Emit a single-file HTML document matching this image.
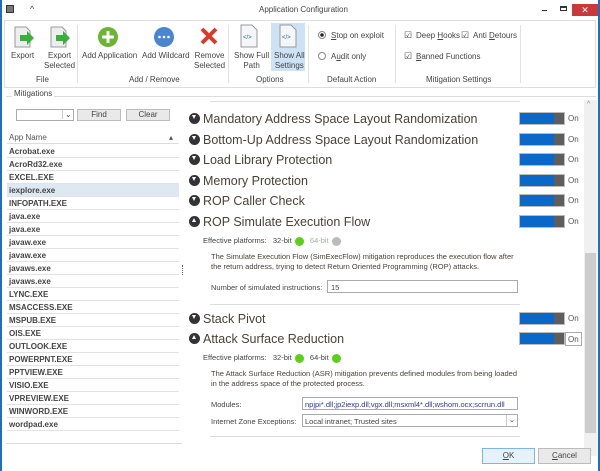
<!DOCTYPE html><html><head><style>
*{margin:0;padding:0;box-sizing:border-box}
body{width:600px;height:471px;overflow:hidden;background:#fff;font-family:"Liberation Sans",sans-serif;color:#333;position:relative;font-size:8px}
.a{position:absolute;white-space:nowrap}
.t{font-size:8px;color:#444}
.h{font-size:12.5px;color:#4a4236}
.ico{width:11px;height:11px;border-radius:50%;background:#333;display:inline-block;position:absolute;left:189px}
.ico:after{content:"";position:absolute;left:3px;top:2px;border:2.5px solid transparent;border-top:4px solid #fff;}
.up:after{top:0;border-top:2.5px solid transparent;border-bottom:4px solid #fff}
.tg{position:absolute;left:519px;width:46px;height:13px;border:1px solid #bbb;background:#0a68c8}
.tg:after{content:"";position:absolute;right:0;top:0;width:10px;height:11px;background:#5e5e5e}
.on{position:absolute;left:568px;font-size:8px;color:#555}
.row{position:absolute;left:7px;width:172px;height:13px;border-bottom:1px solid #e2e2e2;font-weight:bold;font-size:8px;color:#444;padding:2px 0 0 2px;font-family:"Liberation Sans",sans-serif}
.btn{position:absolute;border:1px solid #bbb;background:#e9e9e9;text-align:center;font-size:8px;color:#444}
.sep{position:absolute;height:1px;background:#ddd}
.dot{display:inline-block;width:9px;height:9px;border-radius:50%;background:#5ccf1a;vertical-align:middle;margin-left:3px}
</style></head><body>
<div class="a" style="left:0;top:0;width:2px;height:471px;background:#1e6fbf"></div>
<div class="a" style="left:598px;top:0;width:2px;height:471px;background:#1e6fbf"></div>
<!-- title -->
<div class="a" style="left:6px;top:5px;width:8px;height:8px;border:1px solid #333;background:#777"></div>
<div class="a t" style="left:30px;top:4px;font-size:9px">^</div>
<div class="a t" style="left:259px;top:5px;font-size:8px">Application Configuration</div>
<div class="a" style="left:542px;top:10px;width:5px;height:1px;background:#333"></div>
<div class="a" style="left:560px;top:6px;width:7px;height:5px;border:1px solid #333;border-top-width:2px"></div>
<div class="a" style="left:572px;top:4px;width:26px;height:12px;background:#c9383a;color:#fff;text-align:center;font-size:9px;line-height:12px">✕</div>
<!-- ribbon -->
<div class="a" style="left:4px;top:20px;width:592px;height:68px;border:1px solid #ddd;background:#fff"></div>
<div class="a" style="left:271px;top:23px;width:34px;height:48px;background:#cde2f5"></div>
<svg class="a" style="left:12px;top:25px" width="24" height="24"><path d="M3 2h11l4 4v16H3z" fill="#eee" stroke="#999"/><path d="M8 10h7v-4l7 7-7 7v-4H8z" fill="#3cae3c"/></svg>
<svg class="a" style="left:48px;top:25px" width="24" height="24"><path d="M3 2h11l4 4v16H3z" fill="#eee" stroke="#999"/><path d="M8 10h7v-4l7 7-7 7v-4H8z" fill="#3cae3c"/></svg>
<svg class="a" style="left:97px;top:26px" width="22" height="22"><circle cx="11" cy="11" r="10" fill="#6ab531"/><path d="M11 5v12M5 11h12" stroke="#fff" stroke-width="3"/></svg>
<svg class="a" style="left:153px;top:26px" width="22" height="22"><circle cx="11" cy="11" r="10" fill="#4a86d0"/><circle cx="6.5" cy="11" r="1.3" fill="#fff"/><circle cx="11" cy="11" r="1.3" fill="#fff"/><circle cx="15.5" cy="11" r="1.3" fill="#fff"/></svg>
<svg class="a" style="left:199px;top:26px" width="20" height="20"><path d="M3 3l14 14M17 3L3 17" stroke="#d83a2e" stroke-width="4"/></svg>
<svg class="a" style="left:239px;top:24px" width="20" height="24"><path d="M2 1h11l5 5v17H2z" fill="#f4f6f8" stroke="#999"/><text x="4" y="15" font-size="6" fill="#2b5c9e" font-family="Liberation Sans">&lt;/&gt;</text></svg>
<svg class="a" style="left:278px;top:24px" width="20" height="24"><path d="M2 1h11l5 5v17H2z" fill="#f4f6f8" stroke="#999"/><text x="4" y="15" font-size="6" fill="#2b5c9e" font-family="Liberation Sans">&lt;/&gt;</text></svg>
<div class="a t" style="left:11px;top:51px">Export</div>
<div class="a t" style="left:44px;top:51px;text-align:center;line-height:10px">Export<br>Selected</div>
<div class="a t" style="left:82px;top:51px">Add Application</div>
<div class="a t" style="left:142px;top:51px">Add Wildcard</div>
<div class="a t" style="left:194px;top:51px;text-align:center;line-height:10px">Remove<br>Selected</div>
<div class="a t" style="left:234px;top:51px;text-align:center;line-height:10px">Show Full<br>Path</div>
<div class="a t" style="left:274px;top:51px;text-align:center;line-height:10px">Show All<br>Settings</div>
<div class="a t" style="left:36px;top:75px">File</div>
<div class="a t" style="left:129px;top:75px">Add / Remove</div>
<div class="a t" style="left:256px;top:75px">Options</div>
<div class="a t" style="left:327px;top:75px">Default Action</div>
<div class="a t" style="left:426px;top:75px">Mitigation Settings</div>
<div class="a" style="left:77px;top:25px;width:1px;height:58px;background:#e2e2e2"></div>
<div class="a" style="left:228px;top:25px;width:1px;height:58px;background:#e2e2e2"></div>
<div class="a" style="left:308px;top:25px;width:1px;height:58px;background:#e2e2e2"></div>
<div class="a" style="left:395px;top:25px;width:1px;height:58px;background:#e2e2e2"></div>
<div class="a" style="left:520px;top:25px;width:1px;height:58px;background:#e2e2e2"></div>
<div class="a" style="left:318px;top:31px;width:8px;height:8px;border:1px solid #888;border-radius:50%;background:radial-gradient(#222 40%,#fff 45%)"></div>
<div class="a t" style="left:331px;top:31px"><u>S</u>top on exploit</div>
<div class="a" style="left:318px;top:52px;width:8px;height:8px;border:1px solid #888;border-radius:50%"></div>
<div class="a t" style="left:331px;top:52px">A<u>u</u>dit only</div>
<div class="a t" style="left:404px;top:30px;font-size:9px">☑</div><div class="a t" style="left:416px;top:31px">Deep <u>H</u>ooks</div>
<div class="a t" style="left:461px;top:30px;font-size:9px">☑</div><div class="a t" style="left:473px;top:31px">Anti <u>D</u>etours</div>
<div class="a t" style="left:404px;top:51px;font-size:9px">☑</div><div class="a t" style="left:416px;top:52px"><u>B</u>anned Functions</div>
<!-- mitigations group -->
<div class="a" style="left:6px;top:96px;width:590px;height:1px;background:#ddd"></div>
<div class="a t" style="left:12px;top:89px;background:#fff;padding:0 2px">Mitigations</div>
<div class="a" style="left:16px;top:109px;width:58px;height:12px;border:1px solid #aaa"></div>
<div class="a t" style="left:62px;top:110px;border-left:1px solid #ccc;padding-left:2px">⌄</div>
<div class="btn" style="left:77px;top:109px;width:44px;height:12px;line-height:10px">Find</div>
<div class="btn" style="left:126px;top:109px;width:44px;height:12px;line-height:10px">Clear</div>
<div class="row" style="top:131px;font-weight:normal;color:#555;border-bottom:1px solid #ddd">App Name<span style="position:absolute;right:6px">▴</span></div>
<div class="row" style="top:145px">Acrobat.exe</div>
<div class="row" style="top:158px">AcroRd32.exe</div>
<div class="row" style="top:171px">EXCEL.EXE</div>
<div class="row" style="top:184px;background:#dde8f3">iexplore.exe</div>
<div class="row" style="top:197px">INFOPATH.EXE</div>
<div class="row" style="top:210px">java.exe</div>
<div class="row" style="top:223px">java.exe</div>
<div class="row" style="top:236px">javaw.exe</div>
<div class="row" style="top:249px">javaw.exe</div>
<div class="row" style="top:262px">javaws.exe</div>
<div class="row" style="top:275px">javaws.exe</div>
<div class="row" style="top:288px">LYNC.EXE</div>
<div class="row" style="top:301px">MSACCESS.EXE</div>
<div class="row" style="top:314px">MSPUB.EXE</div>
<div class="row" style="top:327px">OIS.EXE</div>
<div class="row" style="top:340px">OUTLOOK.EXE</div>
<div class="row" style="top:353px">POWERPNT.EXE</div>
<div class="row" style="top:366px">PPTVIEW.EXE</div>
<div class="row" style="top:379px">VISIO.EXE</div>
<div class="row" style="top:392px">VPREVIEW.EXE</div>
<div class="row" style="top:405px">WINWORD.EXE</div>
<div class="row" style="top:418px">wordpad.exe</div>
<div class="a" style="left:6px;top:443px;width:176px;height:1px;background:#ddd"></div>
<div class="a" style="left:182px;top:265px;width:1px;height:10px;border-left:1px dotted #666"></div>
<!-- right -->
<div class="sep" style="left:210px;top:101px;width:310px"></div>
<div class="a" style="left:584px;top:100px;width:13px;height:356px;background:#f0f0f0"></div>
<div class="a" style="left:585px;top:253px;width:11px;height:180px;background:#cdcdcd"></div>
<div class="a" style="left:587px;top:101px;font-size:7px;color:#888">^</div>
<div class="a" style="left:587px;top:446px;font-size:7px;color:#888">⌄</div>
<div class="ico" style="top:113px"></div><div class="a h" style="left:203px;top:112px">Mandatory Address Space Layout Randomization</div><div class="tg" style="top:112px"></div><div class="on" style="top:114px">On</div>
<div class="ico" style="top:134px"></div><div class="a h" style="left:203px;top:133px">Bottom-Up Address Space Layout Randomization</div><div class="tg" style="top:133px"></div><div class="on" style="top:135px">On</div>
<div class="ico" style="top:154px"></div><div class="a h" style="left:203px;top:153px">Load Library Protection</div><div class="tg" style="top:153px"></div><div class="on" style="top:155px">On</div>
<div class="ico" style="top:175px"></div><div class="a h" style="left:203px;top:174px">Memory Protection</div><div class="tg" style="top:174px"></div><div class="on" style="top:176px">On</div>
<div class="ico" style="top:195px"></div><div class="a h" style="left:203px;top:194px">ROP Caller Check</div><div class="tg" style="top:194px"></div><div class="on" style="top:196px">On</div>
<div class="ico up" style="top:216px"></div><div class="a h" style="left:203px;top:215px">ROP Simulate Execution Flow</div><div class="tg" style="top:215px"></div><div class="on" style="top:217px">On</div>
<div class="a t" style="left:203px;top:236px;font-size:7.5px">Effective platforms: &nbsp; 32-bit<span class="dot"></span> &nbsp; <span style="color:#aaa">64-bit</span><span class="dot" style="background:#bbb"></span></div>
<div class="a" style="left:211px;top:252px;font-size:7.5px;color:#4a4236;line-height:10px">The Simulate Execution Flow (SimExecFlow) mitigation reproduces the execution flow after<br>the return address, trying to detect Return Oriented Programming (ROP) attacks.</div>
<div class="a t" style="left:211px;top:283px;font-size:7.5px">Number of simulated instructions:</div>
<div class="a t" style="left:327px;top:280px;width:191px;height:13px;border:1px solid #aaa;padding:2px 3px;font-size:7.5px">15</div>
<div class="sep" style="left:210px;top:304px;width:310px"></div>
<div class="ico" style="top:313px"></div><div class="a h" style="left:203px;top:312px">Stack Pivot</div><div class="tg" style="top:312px"></div><div class="on" style="top:314px">On</div>
<div class="ico up" style="top:333px"></div><div class="a h" style="left:203px;top:332px">Attack Surface Reduction</div><div class="tg" style="top:332px"></div><div class="on" style="top:332px;left:565px;border:1px solid #aaa;padding:2px 2px;height:14px">On</div>
<div class="a t" style="left:203px;top:353px;font-size:7.5px">Effective platforms: &nbsp; 32-bit<span class="dot"></span> &nbsp; 64-bit<span class="dot"></span></div>
<div class="a" style="left:211px;top:369px;font-size:7.5px;color:#4a4236;line-height:10px">The Attack Surface Reduction (ASR) mitigation prevents defined modules from being loaded<br>in the address space of the protected process.</div>
<div class="a t" style="left:211px;top:400px;font-size:7.5px">Modules:</div>
<div class="a" style="left:302px;top:397px;width:216px;height:13px;border:1px solid #aaa;padding:2px 2px;font-size:7.5px;color:#2b3b8a">npjpi*.dll;jp2iexp.dll;vgx.dll;msxml4*.dll;wshom.ocx;scrrun.dll</div>
<div class="a t" style="left:211px;top:417px;font-size:7.5px">Internet Zone Exceptions:</div>
<div class="a t" style="left:302px;top:414px;width:216px;height:13px;border:1px solid #aaa;padding:2px 2px;font-size:7.5px">Local intranet; Trusted sites<span style="position:absolute;right:0;top:0;width:11px;height:11px;border-left:1px solid #ccc;text-align:center">⌄</span></div>
<div class="sep" style="left:210px;top:436px;width:310px"></div>
<div class="btn" style="left:482px;top:448px;width:53px;height:16px;line-height:14px;border-color:#7eb4ea;background:#e5f1fb"><u>O</u>K</div>
<div class="btn" style="left:538px;top:448px;width:53px;height:16px;line-height:14px"><u>C</u>ancel</div>
</body></html>
